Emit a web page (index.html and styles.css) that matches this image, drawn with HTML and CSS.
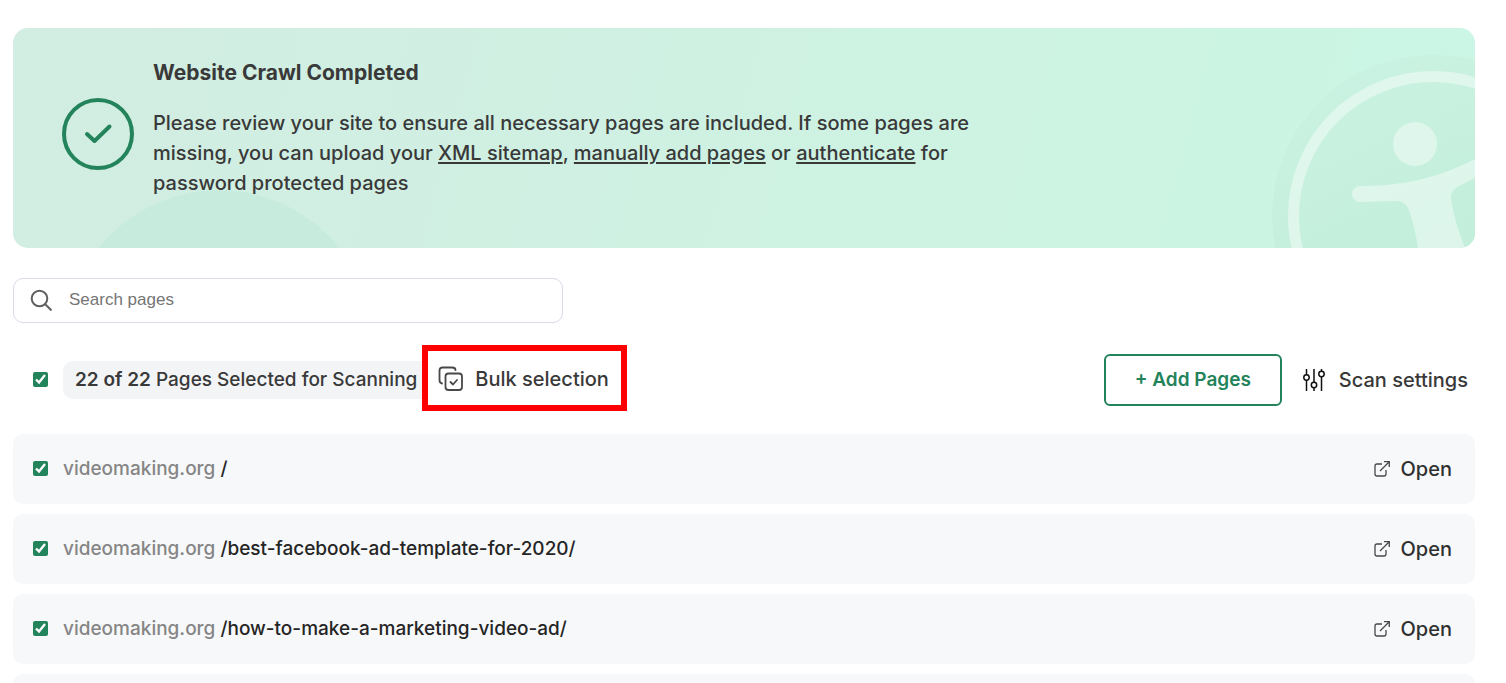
FILE: index.html
```html
<!DOCTYPE html>
<html lang="en">
<head>
<meta charset="utf-8">
<title>Website Crawl Completed</title>
<meta name="viewport" content="width=device-width, initial-scale=1">
<link rel="stylesheet" href="styles.css">
</head>
<body>
<svg class="defs" aria-hidden="true">
  <symbol id="open" viewBox="0 0 18 18"><path d="M9 4H4Q2 4 2 6V14Q2 16 4 16H11Q13 16 13 14V10M7 11L16 2M11 1.700H16.300V7"/></symbol>
</svg>
<main class="page">
  <section class="banner">
    <svg class="art art-left" viewBox="0 0 306 58" aria-hidden="true"><circle cx="154" cy="154" r="154" fill="#c7ecdd"/></svg>
    <svg class="art art-right" viewBox="0 0 203 193" aria-hidden="true">
      <defs>
        <linearGradient id="disc" x1="0.3" y1="0" x2="0.6" y2="0.65"><stop offset="0" stop-color="#caf2e2"/><stop offset="1" stop-color="#c3eedb"/></linearGradient>
      </defs>
      <circle cx="161" cy="161" r="161" fill="url(#disc)"/>
      <g fill="#fff" fill-opacity=".42">
        <circle cx="161" cy="161" r="139.500" fill="none" stroke="#fff" stroke-opacity=".42" stroke-width="11"/>
        <circle cx="143" cy="89" r="22"/>
        <path d="M88 131C131 131 166 123 203 104V123L187 131Q178 135 179 144Q183 169 193 193H146Q143 173 137 155Q134 147 126 146L88 147A8 8 0 0 1 88 131Z"/>
      </g>
    </svg>
    <svg class="done" viewBox="0 0 72 72" aria-hidden="true"><circle cx="36" cy="36" r="34"/><path d="M25 36L32.500 43L47.500 28.500"/></svg>
    <div class="message">
      <h1 class="title">Website Crawl Completed</h1>
      <p class="text">Please review your site to ensure all necessary pages are included. If some pages are missing, you can upload your <a href="#">XML sitemap</a>, <a href="#">manually add pages</a> or <a href="#">authenticate</a> for password protected pages</p>
    </div>
  </section>
  <label class="search">
    <svg class="search-icon" viewBox="0 0 22 22" aria-hidden="true"><circle cx="9.500" cy="9.500" r="7.800"/><path d="M15 15L21.500 21.500"/></svg>
    <input class="search-input" type="search" placeholder="Search pages" aria-label="Search pages">
  </label>
  <div class="toolbar">
    <input class="check" type="checkbox" checked aria-label="Select all pages">
    <div class="count"><strong>22 of 22</strong> Pages Selected for Scanning</div>
    <button class="bulk" type="button">
      <svg class="bulk-icon" viewBox="0 0 26 26" aria-hidden="true"><rect x="7.500" y="7.500" width="16.500" height="16.500" rx="3"/><path d="M4 17.500Q1.500 17 1.500 14V4.500Q1.500 1.500 4.500 1.500H14Q17.500 1.500 17.500 4M12.500 16L15 18.500L19 14"/></svg>
      Bulk selection
    </button>
    <div class="actions">
      <button class="add" type="button">+ Add Pages</button>
      <button class="settings" type="button">
        <svg class="settings-icon" viewBox="0 0 22 22" aria-hidden="true"><path d="M3.500 0V6M3.500 11V22M11 0V13.500M11 18.500V22M18.500 0V2.500M18.500 7.500V22"/><circle cx="3.500" cy="8.500" r="2.700"/><circle cx="11" cy="16" r="2.700"/><circle cx="18.500" cy="5" r="2.700"/></svg>
        Scan settings
      </button>
    </div>
  </div>
  <ul class="list">
    <li class="row"><label class="entry"><input class="check" type="checkbox" checked><span><span class="host">videomaking.org</span> /</span></label><a class="open" href="#"><svg class="open-icon" aria-hidden="true"><use href="#open"/></svg>Open</a></li>
    <li class="row"><label class="entry"><input class="check" type="checkbox" checked><span><span class="host">videomaking.org</span> /best-facebook-ad-template-for-2020/</span></label><a class="open" href="#"><svg class="open-icon" aria-hidden="true"><use href="#open"/></svg>Open</a></li>
    <li class="row"><label class="entry"><input class="check" type="checkbox" checked><span><span class="host">videomaking.org</span> /how-to-make-a-marketing-video-ad/</span></label><a class="open" href="#"><svg class="open-icon" aria-hidden="true"><use href="#open"/></svg>Open</a></li>
    <li class="row"></li>
  </ul>
</main>
</body>
</html>
```
FILE: styles.css
```css
* { box-sizing: border-box; }
body {
  margin: 0;
  background: #fff;
  color: #393939;
  font: 500 20px/30px Inter, "Liberation Sans", sans-serif;
}
button, input { font: inherit; color: inherit; }
button { border: 0; background: none; padding: 0; cursor: pointer; }
svg { fill: none; flex: none; }
.defs { position: absolute; width: 0; height: 0; }
.page { height: 100vh; overflow: hidden; padding: 28px 31px 0 13px; }

.banner {
  position: relative;
  display: flex;
  align-items: center;
  gap: 19px;
  min-height: 220px;
  padding: 30px 49px 50px;
  border-radius: 15px;
  overflow: hidden;
  background: linear-gradient(105deg, #d2ede2 5%, #cff0e2 40%, #cdf4e3 75%, #cbf5e4 90%);
}
.art { position: absolute; bottom: 0; }
.art-left { left: 52px; width: 306px; height: 58px; }
.art-right { right: 0; width: 203px; height: 193px; }
.done { position: relative; width: 72px; height: 72px; margin-top: 12px; stroke: #23835a; stroke-width: 4; stroke-linecap: round; stroke-linejoin: round; }
.message { position: relative; max-width: 820px; }
.title { margin: 0 0 20px; font-size: 21px; font-weight: 700; line-height: 30px; }
.text { margin: 0; }
.text a { color: inherit; text-decoration-thickness: 2px; text-underline-offset: 2px; }

.search {
  display: flex;
  align-items: center;
  gap: 17px;
  width: 550px;
  max-width: 100%;
  height: 45px;
  margin-top: 30px;
  padding: 0 16px 1px;
  border: 1px solid #d9dbe6;
  border-radius: 10px;
}
.search-icon { width: 22px; height: 22px; stroke: #5f6060; stroke-width: 2; }
.search-input { flex: 1; min-width: 0; border: 0; padding: 0; outline: 0; background: none; font: 400 17px/20px "Liberation Sans", sans-serif; }
.search-input::placeholder { color: #757575; opacity: 1; }

.toolbar { display: flex; align-items: center; margin-top: 22px; padding-left: 20px; }
.check { flex: none; width: 15px; height: 15px; margin: 0 15px 0 0; accent-color: #23835a; }
.toolbar > .check { margin-top: 2px; }
.count { height: 38px; margin-top: 3px; padding: 0 5px 0 12px; border-radius: 10px 0 0 10px; background: #f2f4f6; font-size: 19px; line-height: 37px; white-space: nowrap; }
.count strong { font-weight: 600; }
.bulk { display: flex; align-items: center; gap: 11px; height: 66px; padding: 2px 12px 0 10px; border: 6px solid #f00; white-space: nowrap; }
.bulk-icon { width: 26px; height: 26px; stroke: #484848; stroke-width: 1.8; stroke-linecap: round; stroke-linejoin: round; }
.actions { display: flex; align-items: center; gap: 21px; margin-left: auto; padding: 4px 7px 0 0; white-space: nowrap; }
.add { width: 178px; height: 52px; border: 2px solid #23835a; border-radius: 6px; color: #23835a; font-size: 19px; font-weight: 600; }
.settings { display: flex; align-items: center; gap: 14px; }
.settings-icon { width: 22px; height: 22px; stroke: #111; stroke-width: 1.5; }

.list { display: grid; gap: 10px; margin: 23px 0 0; padding: 0; list-style: none; }
.row { display: flex; align-items: center; justify-content: space-between; height: 70px; padding: 0 23px 0 20px; border-radius: 10px; background: #f7f8fa; }
.entry { display: flex; align-items: center; font-size: 19px; color: #252525; }
.entry .check { margin-bottom: 2px; }
.host { color: #858585; }
.open { display: flex; align-items: center; gap: 10px; color: #303030; text-decoration: none; }
.open-icon { width: 18px; height: 18px; stroke: #484848; stroke-width: 1.3; }
```
